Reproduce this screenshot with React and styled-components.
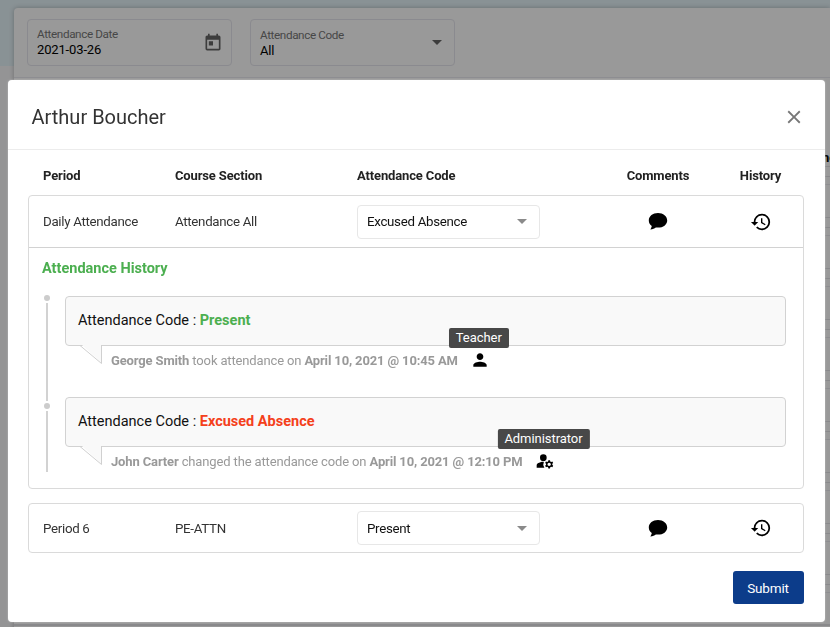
import React, { useState } from 'react';
import styled, { createGlobalStyle } from 'styled-components';
import { MdClose, MdHistory, MdManageAccounts, MdPerson, MdToday } from 'react-icons/md';

const GlobalStyle = createGlobalStyle`
	* {
		box-sizing: border-box;
	}
	body {
		margin: 0;
		overflow: hidden;
		font-family: Roboto, "Liberation Sans", sans-serif;
		font-size: 13px;
		color: #333;
	}
`

const Page = styled.div`
	height: 627px;
	padding: 8px 0 0 14px;
	overflow: hidden;
	background: linear-gradient(#e5f3f8 66px, #f7f7f9 66px);
`

const Panel = styled.main`
	height: 640px;
	background: #fff;
	border-top-left-radius: 4px;
	box-shadow: 0 0 5px rgba(0, 0, 0, 0.25);
`

const Filters = styled.div`
	display: flex;
	gap: 18px;
	height: 70px;
	padding: 11px 0 0 13px;
	border-bottom: 1px solid #ececf2;
`

const Field = styled.div`
	display: flex;
	align-items: center;
	justify-content: space-between;
	width: 205px;
	height: 47px;
	padding: 0 ${p => p.$end}px 0 9px;
	border: 1px solid #e6e6ee;
	border-radius: 4px;
	color: #666;
	label {
		display: block;
		margin-top: ${p => p.$drop || -1}px;
		font-size: 11.7px;
		letter-spacing: -0.38px;
		line-height: 15px;
		color: #777;
	}
	span {
		display: block;
		font-size: 13px;
		letter-spacing: -0.15px;
		line-height: 15px;
		color: #000;
	}
`

const Arrow = styled.i`
	border: 5px solid transparent;
	border-top-color: ${p => p.$dark ? '#666' : '#8a8a8a'};
	border-bottom: 0;
`

const Students = styled.div`
	display: flex;
	flex-direction: column;
	align-items: flex-end;
	height: 547px;
	border-bottom: 1px solid #e4e4e8;
	h4 {
		height: 99px;
		width: 8px;
		margin: 0;
		padding-top: 71px;
		border-bottom: 1px solid #e4e4e8;
		font-size: 13px;
		line-height: 17px;
		white-space: nowrap;
		color: #000;
	}
`

const StudentRow = styled.div`
	width: 100%;
	height: 42px;
	flex: none;
	margin-top: 9px;
	border: solid #e4e4e8;
	border-width: 1px 0;
	&::before {
		content: '';
		display: block;
		height: 7px;
		border-bottom: 1px solid #ececf0;
	}
`

const Backdrop = styled.div`
	position: fixed;
	inset: 0;
	padding: 80px 5.5px 5px 7.5px;
	background: rgba(0, 0, 0, 0.4);
`

const Modal = styled.section`
	height: 542px;
	background: #fff;
	border-radius: 4px;
	box-shadow: 0 0 2px rgba(255, 255, 255, 0.4);
`

const ModalHeader = styled.header`
	display: flex;
	align-items: center;
	justify-content: space-between;
	height: 70px;
	padding: 5px 19.5px 0 24px;
	border-bottom: 1px solid #ececec;
	h1 {
		margin: 0;
		font-size: 20px;
		font-weight: 400;
		color: #333;
	}
`

const IconButton = styled.button`
	display: flex;
	padding: 0;
	border: 0;
	background: none;
	color: ${p => p.$muted ? '#777' : '#000'};
`

const ModalBody = styled.div`
	padding: 0 20.5px;
`

const Grid = styled.div`
	display: grid;
	grid-template-columns: 132px 182px 244px 114px 91px;
	align-items: center;
	height: ${p => p.$height}px;
	padding-left: 14px;
	font-size: 13.3px;
	letter-spacing: -0.3px;
	> :nth-child(n + 4) {
		justify-self: center;
	}
`

const Head = styled(Grid)`
	padding: 5px 0 0 15px;
	font-size: 13px;
	font-weight: 700;
	color: #222;
	letter-spacing: -0.14px;
`

const Card = styled.article`
	margin-bottom: 14px;
	border: 1px solid #dadada;
	border-radius: 4px;
`

const Select = styled.div`
	display: flex;
	align-items: center;
	justify-content: space-between;
	width: 182.5px;
	height: 34px;
	padding: 0 12px 0 9px;
	border: 1px solid #e7e7e7;
	border-radius: 4px;
	color: #111;
`

const History = styled.div`
	height: 241px;
	padding: 12px 17px 0 13px;
	border-top: 1px solid #d2d2d2;
	h2 {
		margin: 0 0 18px;
		font-size: 14.5px;
		line-height: 18px;
		color: #4caf50;
	}
`

const Entry = styled.div`
	display: flex;
	height: 101px;
	&:last-child {
		height: 84px;
	}
`

const Rail = styled.div`
	display: flex;
	flex-direction: column;
	align-items: center;
	width: 8px;
	margin: ${p => p.$last ? '6px 15px 9px 1px' : '-1px 15px -4px 1px'};
	&::before {
		content: '';
		width: 6px;
		height: 6px;
		margin-bottom: 2px;
		flex: none;
		border-radius: 50%;
		background: #ccc;
	}
	&::after {
		content: '';
		width: 2px;
		flex: 1;
		background: #d2d2d2;
	}
`

const EntryBody = styled.div`
	flex: 1;
	margin-left: -1px;
`

const Bubble = styled.div`
	position: relative;
	height: 50px;
	padding-left: 12px;
	border: 1px solid #d2d2d2;
	border-radius: 4px;
	background: #f9f9f9;
	font-size: 14.5px;
	line-height: 47px;
	color: #111;
	b {
		color: ${p => p.$color};
	}
	svg {
		position: absolute;
		left: 13px;
		top: 47px;
	}
`

const Meta = styled.div`
	display: flex;
	align-items: center;
	height: 28px;
	padding-left: 46px;
	letter-spacing: -0.14px;
	color: #999;
`

const Role = styled.span`
	position: relative;
	display: flex;
	margin-left: 12px;
	color: #000;
`

const Tooltip = styled.span`
	position: absolute;
	left: calc(50% - 1px);
	bottom: calc(100% + 2px);
	height: 20px;
	padding: 0 7px;
	transform: translateX(-50%);
	border-radius: 2px;
	background: #484848;
	color: #fff;
	line-height: 20px;
	letter-spacing: -0.05px;
`

const Actions = styled.footer`
	display: flex;
	justify-content: flex-end;
	padding-top: 4px;
`

const Submit = styled.button`
	width: 71px;
	height: 33px;
	margin-right: 0.5px;
	padding: 0;
	border: 0;
	border-radius: 3px;
	background: #0c3c8a;
	font: 400 13.5px Roboto, sans-serif;
	letter-spacing: -0.15px;
	color: #fff;
`

const CommentIcon = () => (
	<svg width="20" height="19" viewBox="0 0 20 19" fill="currentColor">
		<path d="M10 1C4.8 1 .8 4.1.8 8.4c0 2.3 1.2 4.2 3 5.5-.3 1.5-.9 2.6-1.5 3.5 2.6-.1 4.2-1 5.5-2 .7.1 1.4.2 2.2.2 5.2 0 9.2-3.1 9.2-7.2S15.200 1 10 1z" />
	</svg>
)

const Tail = () => (
	<svg width="24" height="21" viewBox="0 0 24 21">
		<path d="M2 0L22.500 19V0z" fill="#f9f9f9" />
		<path d="M1 1.500L22.500 19.500V1" fill="none" stroke="#d0d0d0" />
	</svg>
)

const periods = [
	{
		name: 'Daily Attendance',
		section: 'Attendance All',
		code: 'Excused Absence',
		history: [
			{ code: 'Present', color: '#4caf50', who: 'George Smith', action: 'took attendance on', when: 'April 10, 2021 @ 10:45 AM', role: 'Teacher', icon: MdPerson },
			{ code: 'Excused Absence', color: '#f4401b', who: 'John Carter', action: 'changed the attendance code on', when: 'April 10, 2021 @ 12:10 PM', role: 'Administrator', icon: MdManageAccounts },
		],
	},
	{ name: 'Period 6', section: 'PE-ATTN', code: 'Present' },
]

const HistoryEntry = ({ item, last }) => {
	const Icon = item.icon
	return (
		<Entry>
			<Rail $last={last} />
			<EntryBody>
				<Bubble $color={item.color}>
					Attendance Code : <b>{item.code}</b>
					<Tail />
				</Bubble>
				<Meta>
					<span><b>{item.who}</b> {item.action} <b>{item.when}</b></span>
					<Role>
						<Icon size={20} />
						<Tooltip>{item.role}</Tooltip>
					</Role>
				</Meta>
			</EntryBody>
		</Entry>
	)
}

const PeriodCard = ({ period }) => {
	const [open, setOpen] = useState(true)
	return (
		<Card>
			<Grid $height={period.history ? 51 : 48}>
				<span>{period.name}</span>
				<span>{period.section}</span>
				<Select>{period.code}<Arrow /></Select>
				<IconButton aria-label="Comments"><CommentIcon /></IconButton>
				<IconButton aria-label="History" onClick={() => setOpen(!open)}><MdHistory size={22} /></IconButton>
			</Grid>
			{period.history && open ? (
				<History>
					<h2>Attendance History</h2>
					{period.history.map((item, i) => (
						<HistoryEntry key={item.who} item={item} last={i === period.history.length - 1} />
					))}
				</History>
			) : null}
		</Card>
	)
}

const App = () => (
	<>
		<GlobalStyle />
		<Page>
			<Panel>
				<Filters>
					<Field $end={8}>
						<div><label>Attendance Date</label><span>2021-03-26</span></div>
						<MdToday size={20} />
					</Field>
					<Field $end={12} $drop={1}>
						<div><label>Attendance Code</label><span>All</span></div>
						<Arrow $dark />
					</Field>
				</Filters>
				<Students>
					<h4>nents</h4>
					{[...Array(9)].map((_, i) => <StudentRow key={i} />)}
				</Students>
			</Panel>
		</Page>
		<Backdrop>
			<Modal>
				<ModalHeader>
					<h1>Arthur Boucher</h1>
					<IconButton $muted aria-label="Close"><MdClose size={22} /></IconButton>
				</ModalHeader>
				<ModalBody>
					<Head $height={45}>
						<span>Period</span>
						<span>Course Section</span>
						<span>Attendance Code</span>
						<span>Comments</span>
						<span>History</span>
					</Head>
					{periods.map(p => <PeriodCard key={p.name} period={p} />)}
					<Actions>
						<Submit>Submit</Submit>
					</Actions>
				</ModalBody>
			</Modal>
		</Backdrop>
	</>
)

export default App
